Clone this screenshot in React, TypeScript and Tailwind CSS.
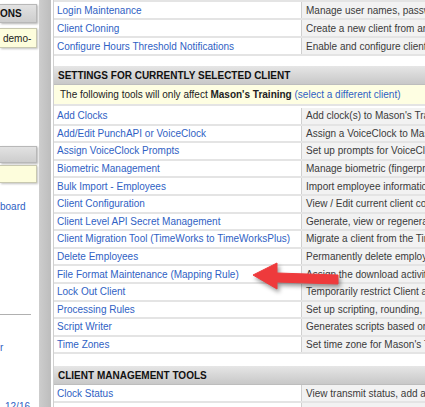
import React from "react";

type Tool = { name: string; desc: string };

const topTools: Tool[] = [
  { name: "Login Maintenance", desc: "Manage user names, passwords and access rights" },
  { name: "Client Cloning", desc: "Create a new client from an existing client" },
  { name: "Configure Hours Threshold Notifications", desc: "Enable and configure client hours threshold notifications" },
];

const clientTools: Tool[] = [
  { name: "Add Clocks", desc: "Add clock(s) to Mason's Training" },
  { name: "Add/Edit PunchAPI or VoiceClock", desc: "Assign a VoiceClock to Mason's Training" },
  { name: "Assign VoiceClock Prompts", desc: "Set up prompts for VoiceClock" },
  { name: "Biometric Management", desc: "Manage biometric (fingerprint) templates" },
  { name: "Bulk Import - Employees", desc: "Import employee information from a file" },
  { name: "Client Configuration", desc: "View / Edit current client configuration" },
  { name: "Client Level API Secret Management", desc: "Generate, view or regenerate API secrets" },
  { name: "Client Migration Tool (TimeWorks to TimeWorksPlus)", desc: "Migrate a client from the TimeWorks platform" },
  { name: "Delete Employees", desc: "Permanently delete employees" },
  { name: "File Format Maintenance (Mapping Rule)", desc: "Assign the download activity file format" },
  { name: "Lock Out Client", desc: "Temporarily restrict Client access" },
  { name: "Processing Rules", desc: "Set up scripting, rounding, and overtime rules" },
  { name: "Script Writer", desc: "Generates scripts based on rules" },
  { name: "Time Zones", desc: "Set time zone for Mason's Training" },
];

const managementTools: Tool[] = [
  { name: "Clock Status", desc: "View transmit status, add and edit clocks" },
];

function ToolRow({ tool, tall }: { tool: Tool; tall?: boolean }) {
  return (
    <div className={`flex shrink-0 ${tall ? "h-[18px]" : "h-[17.6px]"} border-b-2 border-[#e4e4e4]`}>
      <div className="flex w-[247px] shrink-0 items-center overflow-hidden whitespace-nowrap bg-white pl-[3px]">
        <a className="text-[10px] text-[#2f5fc4]">{tool.name}</a>
      </div>
      <div className="flex flex-1 items-center overflow-hidden whitespace-nowrap border-l border-[#cfcfcf] bg-[#f2f2f2] pl-[4px] text-[10px] text-[#3a3a3a]">
        {tool.desc}
      </div>
    </div>
  );
}

function SectionHeader({ title }: { title: string }) {
  return (
    <div className="flex h-[19px] shrink-0 items-center whitespace-nowrap border-b border-[#bdbdbd] bg-gradient-to-b from-[#e6e6e6] to-[#c8c8c8] pl-[4px] text-[10px] font-bold text-[#111]">
      {title}
    </div>
  );
}

export default function App() {
  return (
    <div className="relative flex h-[407px] w-[425px] overflow-hidden bg-white font-['Liberation_Sans',Arial,sans-serif]">
      {/* sidebar, scrolled off to the left */}
      <div className="flex w-[39px] shrink-0 flex-col overflow-hidden">
        <div className="mt-[4px] flex h-[19px] w-[37px] shrink-0 items-center border border-l-0 border-[#b8b8b8] bg-gradient-to-b from-[#e2e2e2] to-[#cdcdcd] text-[10px] font-bold text-[#111] shadow-[1px_1px_2px_rgba(0,0,0,0.3)]">
          ONS
        </div>
        <div className="mt-[5px] h-[20px] w-[37px] shrink-0 border border-l-0 border-[#c8c8b0] bg-[#fdfddc] pl-[3px] pt-[2px] text-[10px] text-[#222] shadow-[1px_1px_2px_rgba(0,0,0,0.25)]">
          demo-
        </div>
        <div className="mt-[98px] h-[17px] w-[37px] shrink-0 border border-l-0 border-[#b8b8b8] bg-gradient-to-b from-[#e2e2e2] to-[#cdcdcd] shadow-[1px_1px_2px_rgba(0,0,0,0.3)]" />
        <div className="mt-[2px] h-[18px] w-[37px] shrink-0 border border-l-0 border-[#c8c8b0] bg-[#fdfddc] shadow-[1px_1px_2px_rgba(0,0,0,0.25)]" />
        <a className="mt-[18px] shrink-0 text-[10px] leading-[12px] text-[#2f5fc4]">board</a>
        <div className="mt-[101px] h-px w-[31px] shrink-0 bg-[#b0b0b0]" />
        <a className="mt-[27px] shrink-0 text-[10px] leading-[12px] text-[#2f5fc4]">r</a>
        <a className="mt-[47px] shrink-0 pl-[5px] text-[10px] leading-[12px] text-[#2f5fc4]">12/16</a>
      </div>

      {/* splitter */}
      <div className="w-[12px] shrink-0 bg-gradient-to-r from-[#cdcdcd] to-[#bdbdbd]" />

      {/* main */}
      <div className="ml-[2px] flex min-w-0 flex-1 flex-col border-l border-[#d0d0d0]">
        <div className="h-[2px] shrink-0 bg-[#e4e4e4]" />
        {topTools.map((t) => (
          <ToolRow key={t.name} tool={t} tall />
        ))}

        <div className="mt-[10px] shrink-0">
          <SectionHeader title="SETTINGS FOR CURRENTLY SELECTED CLIENT" />
        </div>
        <div className="flex h-[21px] shrink-0 items-center whitespace-nowrap border-b-2 border-[#e4e4e4] bg-[#fefee2] pl-[6px] text-[10px] text-[#222]">
          The following tools will only affect&nbsp;<b>Mason's Training</b>&nbsp;
          <a className="text-[#2f5fc4]">(select a different client)</a>
        </div>
        <div className="h-[2px] shrink-0" />
        {clientTools.map((t) => (
          <ToolRow key={t.name} tool={t} />
        ))}

        <div className="mt-[12px] shrink-0">
          <SectionHeader title="CLIENT MANAGEMENT TOOLS" />
        </div>
        {managementTools.map((t) => (
          <ToolRow key={t.name} tool={t} />
        ))}
        <ToolRow tool={{ name: "", desc: "" }} />
      </div>

      {/* callout arrow */}
      <svg
        className="absolute left-[245px] top-[255px] drop-shadow-[2px_3px_2px_rgba(0,0,0,0.4)]"
        width="105"
        height="45"
        viewBox="0 0 105 45"
      >
        <polygon
          points="8,20 32,8 32,18 93,20 93,29 32,27 32,34"
          fill="#ee3a3c"
          strokeLinejoin="round"
          stroke="#ee3a3c"
          strokeWidth="1"
        />
      </svg>
    </div>
  );
}
